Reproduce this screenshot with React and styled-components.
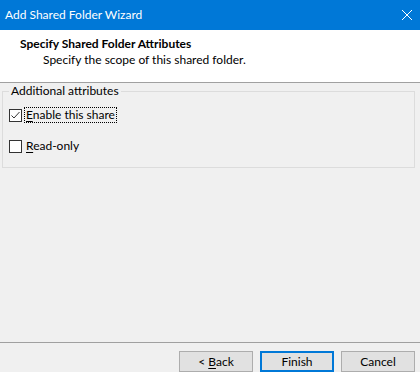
import React from "react";
import styled, { createGlobalStyle, css } from "styled-components";

const Global = createGlobalStyle`
  html, body { margin: 0; padding: 0; background: #f0f0f0; }
  body { font-family: Lato, "Noto Sans", sans-serif; font-size: 12px; color: #000; }
  * { box-sizing: border-box; }
`;

const Window = styled.div`
  width: 420px;
  height: 372px;
  display: flex;
  flex-direction: column;
  background: #f0f0f0;
  overflow: hidden;
`;

const TitleBar = styled.div`
  height: 30px;
  flex: none;
  background: #0078d7;
  color: #fff;
  display: flex;
  align-items: center;
  justify-content: space-between;
  padding: 0 8px 0 5px;
  font-size: 12px;
  line-height: 16px;
`;

const CloseButton = styled.span`
  display: flex;
  align-items: center;
  justify-content: center;
  width: 10px;
  height: 10px;
`;

const Header = styled.div`
  height: 53px;
  flex: none;
  background: #fff;
  border-bottom: 1px solid #a0a0a0;
  padding: 6px 0 0 20px;
  line-height: 16px;
`;

const HeaderTitle = styled.div`
  font-weight: 700;
`;

const HeaderSub = styled.div`
  padding-left: 23px;
`;

const Content = styled.div`
  flex: 1;
  padding: 0 5px 0 2px;
`;

const Group = styled.fieldset`
  margin: 0;
  padding: 0 6px 13px 6px;
  border: 1px solid #dcdcdc;
  line-height: 16px;
`;

const Legend = styled.legend`
  padding: 0 2px;
  line-height: 16px;
`;

const Rows = styled.div`
  display: flex;
  flex-direction: column;
  gap: 15px;
  padding-top: 8px;
`;

const Row = styled.label`
  display: flex;
  align-items: center;
  height: 16px;
`;

const Box = styled.span`
  width: 13px;
  height: 13px;
  border: 1px solid #333;
  background: #fff;
  display: flex;
  align-items: center;
  justify-content: center;
  flex: none;
`;

const Text = styled.span`
  margin-left: 2px;
  padding: 0 1px;
  border: 1px dotted ${(p) => (p.$focus ? "#000" : "transparent")};
  line-height: 14px;
`;

const Key = styled.span`
  text-decoration: underline;
  text-underline-offset: 2px;
`;

const Separator = styled.div`
  height: 1px;
  flex: none;
  background: #a0a0a0;
`;

const Footer = styled.div`
  flex: none;
  height: 29px;
  display: flex;
  justify-content: flex-end;
  gap: 7px;
  padding: 8px 5px 0 0;
`;

const Button = styled.button`
  width: 74px;
  height: 21px;
  font: inherit;
  font-size: 12px;
  color: #000;
  background: #e1e1e1;
  border: 1px solid #adadad;
  padding: 0;
  line-height: 16px;
  ${(p) =>
    p.$default &&
    css`
      border: 2px solid #0078d7;
    `}
`;

function Check({ checked }) {
  return (
    <Box>
      {checked && (
        <svg width="11" height="11" viewBox="0 0 11 11">
          <path d="M1.5 5.5 L4 8 L9.5 2" fill="none" stroke="#333" strokeWidth="1" />
        </svg>
      )}
    </Box>
  );
}

export default function App() {
  return (
    <Window>
      <Global />
      <TitleBar>
        <span>Add Shared Folder Wizard</span>
        <CloseButton>
          <svg width="10" height="10" viewBox="0 0 10 10">
            <path d="M0 0 L10 10 M10 0 L0 10" stroke="#fff" strokeWidth="1" />
          </svg>
        </CloseButton>
      </TitleBar>
      <Header>
        <HeaderTitle>Specify Shared Folder Attributes</HeaderTitle>
        <HeaderSub>Specify the scope of this shared folder.</HeaderSub>
      </Header>
      <Content>
        <Group>
          <Legend>Additional attributes</Legend>
          <Rows>
            <Row>
              <Check checked />
              <Text $focus>
                <Key>E</Key>nable this share
              </Text>
            </Row>
            <Row>
              <Check />
              <Text>
                <Key>R</Key>ead-only
              </Text>
            </Row>
          </Rows>
        </Group>
      </Content>
      <Separator />
      <Footer>
        <Button>
          &lt; <Key>B</Key>ack
        </Button>
        <Button $default>Finish</Button>
        <Button>Cancel</Button>
      </Footer>
    </Window>
  );
}
